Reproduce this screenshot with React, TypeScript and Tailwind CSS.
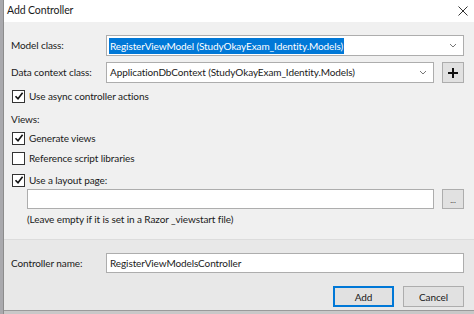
import { useState } from "react"

// Add Controller dialog (VS scaffolding)

const font = { fontFamily: 'Lato, "Noto Sans", sans-serif' }

function Check({ checked, label }: { checked: boolean; label: string }) {
  return (
    <div className="flex items-center h-[14px]">
      <div className="w-[13px] h-[13px] border border-[#333] bg-white flex items-center justify-center">
        {checked && (
          <svg width="10" height="10" viewBox="0 0 10 10">
            <path d="M1.5 5.2 L4 7.8 L8.6 1.8" fill="none" stroke="#111" strokeWidth="1.6" />
          </svg>
        )}
      </div>
      <span className="ml-[4px] whitespace-nowrap">{label}</span>
    </div>
  )
}

function Chevron() {
  return (
    <svg width="8" height="5" viewBox="0 0 8 5" className="mr-[6px]">
      <path d="M1 1 L4 4 L7 1" fill="none" stroke="#777" strokeWidth="1" />
    </svg>
  )
}

export default function App() {
  const [name] = useState("RegisterViewModelsController")

  return (
    <div
      className="w-[474px] h-[314px] flex bg-[#b4b4b4] overflow-hidden text-[10px] tracking-[-0.1px] text-[#1a1a1a]"
      style={font}
    >
      <div className="w-[3px] bg-[#a9a9ad]" />
      <div className="flex-1 flex flex-col border-l border-[#8c8c8c]">
        {/* Заголовок */}
        <div className="h-[22px] bg-white flex items-center justify-between pl-[3px] pr-[6px]">
          <span className="text-[10.5px]">Add Controller</span>
          <svg width="10" height="10" viewBox="0 0 10 10">
            <path d="M0.5 0.5 L9.5 9.5 M9.5 0.5 L0.5 9.5" stroke="#333" strokeWidth="1" />
          </svg>
        </div>

        {/* Основная часть */}
        <div className="h-[218px] bg-[#f0f0f0] pl-[7px] pr-[10px] pt-[13px] border-b border-[#dcdcdc]">
          <div className="flex items-center h-[21px]">
            <span className="w-[95px] whitespace-nowrap">Model class:</span>
            <div className="flex-1 h-[21px] bg-white border border-[#adadad] flex items-center justify-between">
              <span className="ml-[2px] px-[1px] bg-[#0078d7] text-white leading-[16px] whitespace-nowrap">
                RegisterViewModel (StudyOkayExam_Identity.Models)
              </span>
              <Chevron />
            </div>
          </div>

          <div className="flex items-center h-[21px] mt-[6px]">
            <span className="w-[95px] whitespace-nowrap">Data context class:</span>
            <div className="flex-1 h-[21px] bg-white border border-[#adadad] flex items-center justify-between">
              <span className="ml-[3px] whitespace-nowrap">ApplicationDbContext (StudyOkayExam_Identity.Models)</span>
              <Chevron />
            </div>
            <div className="ml-[8px] w-[22px] h-[21px] bg-[#e1e1e1] border border-[#adadad] flex items-center justify-center">
              <svg width="10" height="10" viewBox="0 0 10 10">
                <path d="M5 0 V10 M0 5 H10" stroke="#111" strokeWidth="2" />
              </svg>
            </div>
          </div>

          <div className="mt-[6px] pl-[1px]">
            <Check checked label="Use async controller actions" />
          </div>

          <div className="mt-[8px] leading-[16px]">Views:</div>

          <div className="mt-[4px] pl-[1px] flex flex-col gap-[6px]">
            <Check checked label="Generate views" />
            <Check checked={false} label="Reference script libraries" />
          </div>
          <div className="mt-[8px] pl-[1px]">
            <Check checked label="Use a layout page:" />
          </div>

          <div className="flex items-center mt-[2px] pl-[16px]">
            <div className="flex-1 h-[20px] bg-white border border-[#adadad]" />
            <div className="ml-[8px] w-[22px] h-[20px] bg-[#e1e1e1] border border-[#adadad] flex items-end justify-center pb-[4px]">
              <span className="text-[8px] leading-[8px] text-[#333]">...</span>
            </div>
          </div>

          <div className="mt-[3px] pl-[16px] whitespace-nowrap">
            (Leave empty if it is set in a Razor _viewstart file)
          </div>
        </div>

        {/* Нижняя панель */}
        <div className="flex-1 bg-[#e8e8e8] pl-[7px] pr-[10px] pt-[13px] flex flex-col">
          <div className="flex items-center h-[20px]">
            <span className="w-[95px] whitespace-nowrap">Controller name:</span>
            <div className="flex-1 h-[20px] bg-white border border-[#adadad] flex items-center">
              <span className="ml-[3px] whitespace-nowrap">{name}</span>
            </div>
          </div>
          <div className="flex justify-end gap-[9px] mt-[13px]">
            <button className="w-[61px] h-[21px] bg-[#e1e1e1] border-2 border-[#0078d7] leading-none">
              Add
            </button>
            <button className="w-[61px] h-[21px] bg-[#e1e1e1] border border-[#adadad] leading-none">
              Cancel
            </button>
          </div>
        </div>
        <div className="h-[4px] bg-[#c8c8c8] border-t border-[#9a9a9a]" />
      </div>
    </div>
  )
}
